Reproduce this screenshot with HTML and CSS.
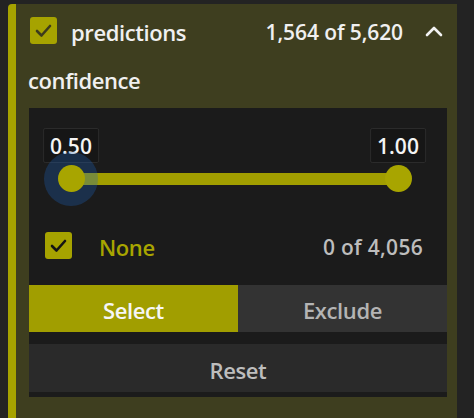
FILE: index.html
```html
<!DOCTYPE html>
<html>
<head>
<meta charset="utf-8">
<link rel="stylesheet" href="styles.css">
</head>
<body>
<div class="card">
  <div class="header">
    <span class="check head-check">
      <svg viewBox="0 0 27 27" width="27" height="27"><path d="M7 14 L11.5 18.5 L20 9" fill="none" stroke="#3c3b1c" stroke-width="2.6" stroke-linecap="round" stroke-linejoin="round"/></svg>
    </span>
    <span class="title">predictions</span>
    <span class="count">1,564 of 5,620</span>
    <svg class="chev" viewBox="0 0 20 12" width="20" height="12"><path d="M3 10 L10 3 L17 10" fill="none" stroke="#f2f2f2" stroke-width="2.6" stroke-linecap="round" stroke-linejoin="round"/></svg>
  </div>
  <div class="field">confidence</div>
  <div class="panel">
    <div class="slider">
      <div class="track"></div>
      <div class="thumb-wrap" style="left:0%">
        <div class="label">0.50</div>
        <div class="halo"></div>
        <div class="thumb"></div>
      </div>
      <div class="thumb-wrap" style="left:100%">
        <div class="label">1.00</div>
        <div class="thumb"></div>
      </div>
    </div>
    <div class="row">
      <span class="check small-check">
        <svg viewBox="0 0 27 27" width="27" height="27"><path d="M7 14 L11.5 18.5 L20 9" fill="none" stroke="#141414" stroke-width="2.6" stroke-linecap="round" stroke-linejoin="round"/></svg>
      </span>
      <span class="none">None</span>
      <span class="row-count">0 of 4,056</span>
    </div>
    <div class="buttons">
      <div class="btn select">Select</div>
      <div class="btn exclude">Exclude</div>
    </div>
    <div class="btn reset">Reset</div>
  </div>
</div>
</body>
</html>
```

FILE: styles.css
```css
html, body {
  margin: 0;
  padding: 0;
  background: #232323;
  height: 100%;
  overflow: hidden;
}
body {
  font-family: "Open Sans", "Noto Sans", sans-serif;
  font-weight: 600;
  color: #ececec;
  letter-spacing: -0.4px;
}
.card {
  margin: 4px 17px 0 8px;
  background: #3e3e1f;
  border-left: 8px solid #a6a300;
  border-top-left-radius: 4px;
  padding: 13px 10px 30px 13px;
  height: 420px;
  box-sizing: border-box;
}
.header {
  display: flex;
  align-items: center;
  height: 27px;
  padding-left: 1px;
}
.check {
  width: 27px;
  height: 27px;
  border-radius: 3px;
  background: #a6a300;
  display: flex;
  flex: none;
}
.title {
  margin-left: 14px;
  font-size: 22px;
  line-height: 27px;
  color: #f0f0f0;
  padding-top: 3px;
}
.count {
  margin-left: auto;
  font-size: 21px;
  line-height: 27px;
  color: #f0f0f0;
  padding-top: 3px;
  letter-spacing: -0.1px;
}
.chev {
  margin-left: 21px;
  margin-right: 3px;
}
.field {
  font-size: 22px;
  line-height: 30px;
  margin-top: 21px;
  margin-left: -1px;
  color: #f0f0f0;
}
.panel {
  margin-top: 13px;
  background: #1b1b1b;
  padding: 20px 0 5px;
}
.slider {
  position: relative;
  height: 78px;
  margin: 0 49px 0 42px;
}
.track {
  position: absolute;
  left: 0;
  right: 0;
  top: 45px;
  height: 12px;
  background: #a19e00;
}
.thumb-wrap {
  position: absolute;
  top: 0;
  width: 0;
  height: 78px;
}
.label {
  position: absolute;
  top: 0;
  left: 0;
  transform: translateX(-50%);
  height: 35px;
  padding: 0 6px;
  box-sizing: border-box;
  background: #161616;
  border: 1px solid #2b2b2b;
  border-radius: 2px;
  font-size: 21px;
  letter-spacing: 0;
  line-height: 35px;
  color: #f4f4f4;
  white-space: nowrap;
}
.halo {
  position: absolute;
  left: -27px;
  top: 24px;
  width: 54px;
  height: 54px;
  border-radius: 50%;
  background: rgba(30, 100, 190, 0.3);
}
.thumb {
  position: absolute;
  left: -13.5px;
  top: 37px;
  width: 27px;
  height: 27px;
  border-radius: 50%;
  background: #a8a500;
}
.row {
  display: flex;
  align-items: center;
  height: 51px;
  margin-top: 14px;
  padding: 0 24px 0 16px;
}
.none {
  margin-left: 27px;
  font-size: 22px;
  color: #a8a500;
  padding-top: 3px;
}
.row-count {
  margin-left: auto;
  font-size: 21px;
  letter-spacing: 0.3px;
  color: #bdbdbd;
  padding-top: 3px;
}
.buttons {
  display: flex;
  margin-top: 14px;
}
.btn {
  height: 47px;
  display: flex;
  align-items: center;
  justify-content: center;
  font-size: 22px;
  padding-top: 3px;
  box-sizing: border-box;
}
.buttons .btn {
  flex: 1;
}
.select {
  background: #a19e00;
  color: #f6f6f6;
}
.exclude {
  background: #333333;
  color: #b4b4b4;
}
.reset {
  margin-top: 12px;
  height: 48px;
  background: #2a2a2a;
  color: #bdbdbd;
}
```
